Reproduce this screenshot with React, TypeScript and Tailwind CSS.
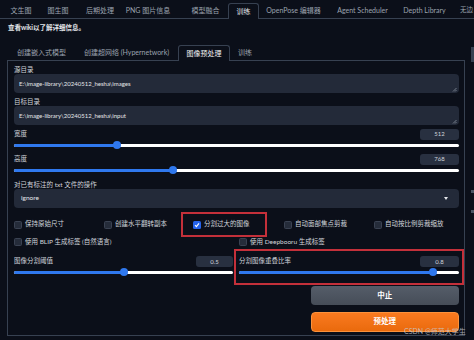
const topTabs = [
  { label: '文生图', cls: 'ml-[4px] w-[34px]' },
  { label: '图生图', cls: 'ml-[2px] w-[36px]' },
  { label: '后期处理', cls: 'ml-[4px] w-[40px]' },
  { label: 'PNG 图片信息', cls: 'ml-[6px] w-[44px]' },
  { label: '模型融合', cls: 'ml-[14px] w-[43px]' },
];

const topTabsRight = [
  { label: 'OpenPose 编辑器', cls: 'ml-[3px] w-[63px]' },
  { label: 'Agent Scheduler', cls: 'ml-[6px] w-[63px]' },
  { label: 'Depth Library', cls: 'ml-[4px] w-[53px]' },
];

function Slider({ pct }: { pct: number }) {
  return (
    <div className="relative flex h-[8px] items-center">
      <div className="h-[3px] w-full rounded-full bg-white" />
      <div className="absolute left-0 h-[3px] rounded-full bg-[#2f78ee]" style={{ width: `${pct}%` }} />
      <div
        className="absolute h-[8px] w-[8px] -translate-x-1/2 rounded-full bg-[#2f78ee]"
        style={{ left: `${pct}%` }}
      />
    </div>
  );
}

function NumBox({ value, w = 'w-[39px]' }: { value: string; w?: string }) {
  return (
    <div className={`${w} flex h-[11px] items-center justify-center rounded-[3px] bg-[#283040] text-[6px] text-[#d1d5db]`}>
      {value}
    </div>
  );
}

function Box({ checked = false }: { checked?: boolean }) {
  if (checked) {
    return (
      <div className="flex h-[8px] w-[8px] shrink-0 items-center justify-center rounded-[1.5px] bg-[#2563eb]">
        <svg width="6" height="6" viewBox="0 0 6 6">
          <polyline points="1,3.2 2.4,4.6 5,1.4" fill="none" stroke="white" strokeWidth="1.1" />
        </svg>
      </div>
    );
  }
  return <div className="h-[8px] w-[8px] shrink-0 rounded-[1.5px] border border-[#3a4252] bg-[#252c3a]" />;
}

function Check({ label, checked }: { label: string; checked?: boolean }) {
  return (
    <div className="flex items-center gap-[3px] whitespace-nowrap text-[6.5px] text-[#d1d5db]">
      <Box checked={checked} />
      <span>{label}</span>
    </div>
  );
}

function TextBox({ value }: { value: string }) {
  return (
    <div className="relative flex h-[19px] items-center rounded-[4px] bg-[#232a39] px-[5px] text-[6px] text-[#e5e7eb]">
      {value}
      <svg className="absolute bottom-[1px] right-[2px]" width="5" height="5" viewBox="0 0 5 5">
        <line x1="1" y1="4.5" x2="4.5" y2="1" stroke="#9ca3af" strokeWidth="0.7" />
        <line x1="3" y1="4.5" x2="4.5" y2="3" stroke="#9ca3af" strokeWidth="0.7" />
      </svg>
    </div>
  );
}

export default function App() {
  return (
    <div className="relative h-[340px] w-[474px] overflow-hidden bg-[#0b0f19] font-['Lato','Noto_Sans_CJK_SC',sans-serif] leading-none">
      {/* top tab bar */}
      <div className="flex h-[19px] items-end border-b border-[#374151]">
        {topTabs.map((t) => (
          <div
            key={t.label}
            className={`${t.cls} flex h-[15px] shrink-0 items-center justify-center whitespace-nowrap text-[7px] text-[#9ca3af]`}
          >
            {t.label}
          </div>
        ))}
        <div className="-mb-px ml-[1px] flex h-[16px] w-[31px] shrink-0 items-center justify-center rounded-t-[3px] border border-b-0 border-[#374151] bg-[#0b0f19] text-[7px] text-[#e5e7eb]">
          训练
        </div>
        {topTabsRight.map((t) => (
          <div
            key={t.label}
            className={`${t.cls} flex h-[15px] shrink-0 items-center justify-center whitespace-nowrap text-[7px] text-[#9ca3af]`}
          >
            {t.label}
          </div>
        ))}
        <div className="ml-[3px] flex h-[15px] shrink-0 items-center whitespace-nowrap pl-[6px] text-[6.5px] text-[#9ca3af]">
          无边
        </div>
      </div>

      <div className="flex">
        <div className="w-[465px] shrink-0">
          {/* info line */}
          <div className="h-[26px] pl-[8px] pt-[5.5px] text-[6.5px] font-bold text-[#e5e7eb]">查看wiki以了解详细信息。</div>

          {/* sub tabs */}
          <div className="ml-[7px] flex h-[16px] w-[458px] items-end border-b border-[#374151]">
            <div className="ml-[1px] flex h-[15px] w-[67px] items-center justify-center whitespace-nowrap text-[7px] text-[#9ca3af]">
              创建嵌入式模型
            </div>
            <div className="ml-[1px] flex h-[15px] w-[101px] items-center justify-center whitespace-nowrap text-[7px] text-[#9ca3af]">
              创建超网络 (Hypernetwork)
            </div>
            <div className="-mb-px ml-[1px] flex h-[16px] w-[52px] items-center justify-center rounded-t-[3px] border border-b-0 border-[#374151] bg-[#0b0f19] text-[7px] text-[#f3f4f6]">
              图像预处理
            </div>
            <div className="ml-[1px] flex h-[15px] w-[28px] items-center justify-center text-[7px] text-[#9ca3af]">训练</div>
          </div>

          {/* panel */}
          <div className="ml-[7px] w-[458px] border-x border-b border-[#374151] pb-[3px] pl-[6px] pr-[5px] pt-[5px] text-[6.5px] text-[#d1d5db]">
            <div className="h-[8px] leading-[8px]">源目录</div>
            <TextBox value="E:\image-library\20240512_hesha\images" />

            <div className="mt-[5px] h-[8px] leading-[8px]">目标目录</div>
            <TextBox value="E:\image-library\20240512_hesha\input" />

            <div className="mt-[3px] flex h-[12px] items-center justify-between">
              <span>宽度</span>
              <NumBox value="512" />
            </div>
            <div className="mt-[1px]">
              <Slider pct={23.1} />
            </div>

            <div className="mt-[4px] flex h-[12px] items-center justify-between">
              <span>高度</span>
              <NumBox value="768" />
            </div>
            <div className="mt-[1px]">
              <Slider pct={35.7} />
            </div>

            <div className="mt-[7px] h-[8px] leading-[8px]">对已有标注的 txt 文件的操作</div>
            <div className="flex h-[19px] items-center justify-between rounded-[4px] bg-[#232a39] pl-[7px] pr-[11px] text-[6.5px] text-[#e5e7eb]">
              <span>ignore</span>
              <svg width="4" height="3" viewBox="0 0 4 3">
                <polygon points="0,0 4,0 2,3" fill="#e5e7eb" />
              </svg>
            </div>

            {/* checkboxes */}
            <div className="mt-[4px] grid h-[25px] grid-cols-5 items-center gap-x-[5px]">
              <Check label="保持原始尺寸" />
              <Check label="创建水平翻转副本" />
              <div className="-ml-[13px] flex h-[25px] w-[86px] items-center border-2 border-[#c4303a] pl-[10px]">
                <Check label="分割过大的图像" checked />
              </div>
              <Check label="自动面部焦点剪裁" />
              <Check label="自动按比例剪裁缩放" />
            </div>
            <div className="grid h-[10px] grid-cols-2 items-center gap-x-[5px]">
              <Check label="使用 BLIP 生成标签 (自然语言)" />
              <Check label="使用 Deepbooru 生成标签" />
            </div>

            {/* split sliders */}
            <div className="mt-[2px] grid grid-cols-2 gap-x-[5px]">
              <div className="pt-[7px]">
                <div className="flex h-[11px] items-center justify-between pr-[1px]">
                  <span>图像分割阈值</span>
                  <NumBox value="0.5" w="w-[37px]" />
                </div>
                <div className="mt-[1px] pr-[1px]">
                  <Slider pct={50} />
                </div>
              </div>
              <div className="-mx-[5px] h-[36px] border-2 border-[#c4303a] px-[3px] pt-[5px]">
                <div className="flex h-[11px] items-center justify-between">
                  <span>分割图像重叠比率</span>
                  <NumBox value="0.8" />
                </div>
                <div className="mt-[1px]">
                  <Slider pct={88.2} />
                </div>
              </div>
            </div>

            {/* buttons */}
            <div className="mt-[1px] grid grid-cols-3">
              <div className="col-start-3 flex flex-col gap-[7px]">
                <div className="flex h-[19px] items-center justify-center rounded-[4px] bg-gradient-to-b from-[#555d69] to-[#464d58] text-[7.5px] font-bold text-white">
                  中止
                </div>
                <div className="flex h-[20px] items-center justify-center rounded-[4px] border border-[#fb923c] bg-gradient-to-b from-[#f97a1f] to-[#ea6a0c] text-[7.5px] font-bold text-white">
                  预处理
                </div>
              </div>
            </div>
          </div>
        </div>

        {/* partial column at the right edge */}
        <div className="ml-[6px] flex w-[4px] flex-col pt-[28px]">
          <div className="h-[15px] w-[3px] bg-[#374151]" />
          <div className="mt-[128px] h-[3px] w-[3px] bg-[#4b5563]" />
          <div className="mt-[17px] h-[3px] w-[3px] bg-[#4b5563]" />
        </div>
      </div>

      {/* watermark */}
      <div className="absolute left-[404px] top-[328px] whitespace-nowrap text-[7px] text-[#c9ccd2] opacity-80">
        CSDN @师范大学生
      </div>
    </div>
  );
}
